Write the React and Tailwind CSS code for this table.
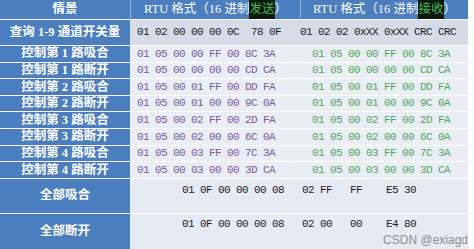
const rows = [
  ['控制第 1 路吸合', '01 05 00 00 FF 00 8C 3A'],
  ['控制第 1 路断开', '01 05 00 00 00 00 CD CA'],
  ['控制第 2 路吸合', '01 05 00 01 FF 00 DD FA'],
  ['控制第 2 路断开', '01 05 00 01 00 00 9C 0A'],
  ['控制第 3 路吸合', '01 05 00 02 FF 00 2D FA'],
  ['控制第 3 路断开', '01 05 00 02 00 00 6C 0A'],
  ['控制第 4 路吸合', '01 05 00 03 FF 00 7C 3A'],
  ['控制第 4 路断开', '01 05 00 03 00 00 3D CA'],
];

const mono = "font-['Liberation_Mono','Noto_Sans_CJK_SC',monospace] text-[11px] tracking-[-0.6px] whitespace-pre";
const cjk = "font-['Liberation_Serif','Noto_Sans_CJK_SC',serif] font-bold text-white text-[12.5px]";

const App = () => (
  <div className="relative w-[474px] h-[249px] bg-white overflow-hidden">
    <div className="w-[468px] flex flex-col">
      <div className="flex h-[19px] bg-[#4a7ebf] text-white">
        <div className={`w-[130px] flex items-center justify-center ${cjk}`}>情景</div>
        <div className={`w-[170px] flex items-center justify-center border-l border-white/40 ${cjk} font-normal`}>
          RTU 格式（16 进制<span className="bg-[#0e1a10] text-[#3fbf52]">发送</span>）
        </div>
        <div className={`w-[168px] flex items-center justify-center border-l border-white/40 ${cjk} font-normal`}>
          RTU 格式（16 进制<span className="bg-[#0e1a10] text-[#3fbf52]">接收</span>）
        </div>
      </div>

      <div className="flex h-[26px] border-t border-white/70">
        <div className={`w-[130px] bg-[#4a7ebf] flex items-center justify-center ${cjk}`}>查询 1-9 通道开关量</div>
        <div className={`w-[170px] bg-[#d5dce8] flex items-center pl-[7px] text-[#222] ${mono}`}>01 02 00 00 00 0C  78 0F</div>
        <div className={`w-[168px] bg-[#d5dce8] flex items-center text-[#222] ${mono}`}>01 02 02 0xXX 0xXX CRC CRC</div>
      </div>

      {rows.map(([label, code]) => (
        <div key={label} className="flex h-[16.6px] border-t border-white/70">
          <div className={`w-[130px] bg-[#4a7ebf] flex items-center justify-center ${cjk}`}>{label}</div>
          <div className={`w-[170px] bg-[#e9edf4] flex items-center pl-[7px] text-[#7b58a6] ${mono}`}>{code}</div>
          <div className={`w-[168px] bg-[#e9edf4] flex items-center pl-[12px] text-[#4da85c] ${mono}`}>{code}</div>
        </div>
      ))}

      <div className="flex h-[35px] border-t border-white/80">
        <div className={`w-[130px] bg-[#4a7ebf] flex items-center justify-center ${cjk}`}>全部吸合</div>
        <div className={`flex-1 bg-[#e6eaf2] pl-[52px] pt-[3px] text-[#222] ${mono}`}>01 0F 00 00 00 08   02 FF   FF    E5 30</div>
      </div>

      <div className="flex h-[37px] border-t border-white/80">
        <div className={`w-[130px] bg-[#4a7ebf] flex items-center justify-center ${cjk}`}>全部断开</div>
        <div className={`flex-1 bg-[#e6eaf2] pl-[52px] pt-[2px] text-[#222] ${mono}`}>01 0F 00 00 00 08   02 00   00    E4 80</div>
      </div>
    </div>

    <div className="absolute right-[6px] bottom-[2px] text-[12px] leading-[14px] text-[#8e8e8e] font-['Liberation_Sans',sans-serif]">
      CSDN @exiagd
    </div>
  </div>
);

export default App;
